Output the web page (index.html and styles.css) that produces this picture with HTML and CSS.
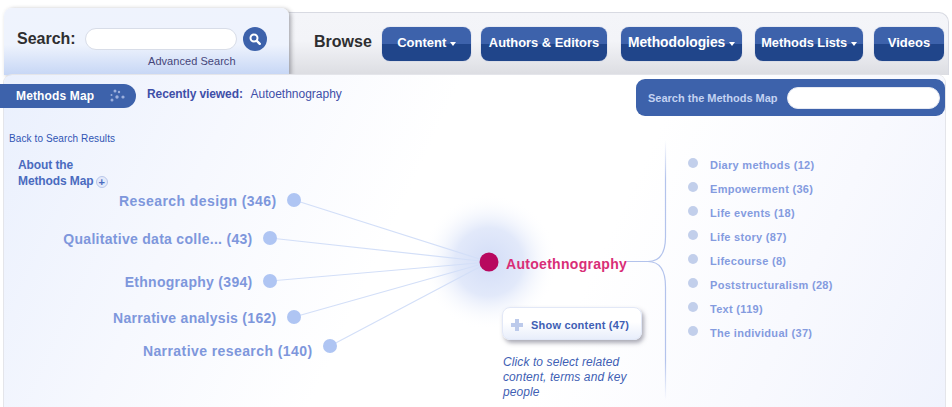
FILE: index.html
```html
<!DOCTYPE html>
<html lang="en">

<head>
    <meta charset="utf-8">
    <title>Methods Map</title>
    <link rel="stylesheet" href="styles.css">
</head>

<body>
    <div class="top">
        <form class="search">
            <div class="search-row">
                <label class="search-label">Search:</label>
                <span class="search-input"></span>
                <span class="search-go">
                    <svg width="14" height="14" viewBox="0 0 14 14">
                        <circle cx="6" cy="6" r="3.500" fill="none" stroke="#fff" stroke-width="2" />
                        <path d="M8.800 8.800L11.800 11.800" stroke="#fff" stroke-width="2.400" stroke-linecap="round" />
                    </svg>
                </span>
            </div>
            <a class="advanced">Advanced Search</a>
        </form>
        <div class="browse">
            <h2 class="browse-title">Browse</h2>
            <a class="btn btn-content">Content <i class="caret"></i></a>
            <a class="btn btn-authors">Authors &amp; Editors</a>
            <a class="btn btn-method">Methodologies <i class="caret"></i></a>
            <a class="btn btn-lists">Methods Lists <i class="caret"></i></a>
            <a class="btn btn-videos">Videos</a>
        </div>
    </div>

    <div class="panel">
        <!-- drawn in page coordinates, see viewBox -->
        <svg class="map" width="941" height="332" viewBox="4 75 941 332">
            <defs>
                <radialGradient id="glow">
                    <stop offset="0" stop-color="#d3ddf7" />
                    <stop offset="0.5" stop-color="#e2e9fa" />
                    <stop offset="1" stop-color="#fff" stop-opacity="0" />
                </radialGradient>
                <linearGradient id="rail" gradientUnits="userSpaceOnUse" x1="0" y1="140" x2="0" y2="400">
                    <stop offset="0" stop-color="#b3c3ec" stop-opacity="0" />
                    <stop offset="0.15" stop-color="#b3c3ec" />
                    <stop offset="0.85" stop-color="#b3c3ec" />
                    <stop offset="1" stop-color="#b3c3ec" stop-opacity="0" />
                </linearGradient>
            </defs>
            <circle cx="489" cy="262" r="68" fill="url(#glow)" />
            <g class="links">
                <path d="M294 200L489 262" />
                <path d="M270 238L489 262" />
                <path d="M270 281L489 262" />
                <path d="M294 317L489 262" />
                <path d="M330 346L489 262" />
            </g>
            <path class="rail" d="M665.500 140V237Q665.500 261.500 648 261.500" stroke="url(#rail)" />
            <path class="rail" d="M665.500 400V287Q665.500 261.500 648 261.500" stroke="url(#rail)" />
            <path class="rail-stem" d="M627 261.500H650" />
            <g class="nodes">
                <circle cx="294" cy="200" r="7" />
                <circle cx="270" cy="238" r="7" />
                <circle cx="270" cy="281" r="7" />
                <circle cx="294" cy="317" r="7" />
                <circle cx="330" cy="346" r="7" />
            </g>
            <circle cx="489" cy="262" r="9.500" fill="#b8085f" />
            <g class="labels">
                <text class="wide" x="276.500" y="206">Research design (346)</text>
                <text x="252.500" y="244">Qualitative data colle... (43)</text>
                <text x="252.500" y="287">Ethnography (394)</text>
                <text x="276.500" y="323">Narrative analysis (162)</text>
                <text class="wide" x="312.500" y="356">Narrative research (140)</text>
            </g>
            <text class="focus" x="506" y="269">Autoethnography</text>
        </svg>

        <div class="panel-head">
            <div class="tab">Methods Map
                <svg width="16" height="14" viewBox="0 0 16 14">
                    <g fill="#9db0dd">
                        <circle cx="3" cy="11" r="1.500" />
                        <circle cx="6" cy="2" r="1.500" />
                        <circle cx="8" cy="8" r="1.700" />
                        <circle cx="10" cy="3" r="1.200" />
                        <circle cx="2.500" cy="6" r="1" />
                        <circle cx="14" cy="8" r="1.600" />
                    </g>
                </svg>
            </div>
            <p class="recent"><strong>Recently viewed:</strong> Autoethnography</p>
            <div class="map-search">
                <span>Search the Methods Map</span>
                <i class="map-input"></i>
            </div>
        </div>

        <a class="back">Back to Search Results</a>
        <p class="about">About the<br>Methods Map<i class="about-plus">+</i></p>

        <ul class="related">
            <li>Diary methods (12)</li>
            <li>Empowerment (36)</li>
            <li>Life events (18)</li>
            <li>Life story (87)</li>
            <li>Lifecourse (8)</li>
            <li>Poststructuralism (28)</li>
            <li>Text (119)</li>
            <li>The individual (37)</li>
        </ul>

        <div class="show">
            <a class="show-btn"><b class="show-plus"></b>Show content (47)</a>
            <p class="show-note">Click to select related content, terms and key people</p>
        </div>
    </div>
</body>

</html>
```

FILE: styles.css
```css
html,
body {
    margin: 0;
    height: 407px;
    overflow: hidden;
    background-color: #fff;
    font-family: "Liberation Sans", Arial, sans-serif;
}

.top {
    display: flex;
    align-items: flex-end;
    height: 75px;
    padding-left: 4px;
}

.search {
    position: relative;
    z-index: 1;
    box-sizing: border-box;
    width: 285px;
    height: 67px;
    padding: 20px 0 0 13px;
    border-radius: 8px 8px 0 0;
    background: linear-gradient(#eff3fd 0, #eef3fd 55%, #c6d6f5 100%);
    box-shadow: 2px 1px 4px rgba(70, 70, 80, .45);
}

.search-row {
    display: flex;
    align-items: center;
    height: 22px;
}

.search-label {
    width: 68px;
    font-size: 16px;
    font-weight: bold;
    color: #2e2e30;
}

.search-input {
    box-sizing: border-box;
    width: 152px;
    height: 22px;
    border: 1px solid #d8dde8;
    border-radius: 11px;
    background-color: #fff;
}

.search-go {
    display: flex;
    align-items: center;
    justify-content: center;
    width: 24px;
    height: 24px;
    margin-left: 6px;
    border-radius: 50%;
    background-color: #3d62ab;
}

.advanced {
    display: block;
    margin: 5px 0 0 131px;
    font-size: 11px;
    letter-spacing: .05px;
    color: #45457a;
}

.browse {
    display: flex;
    align-items: flex-start;
    box-sizing: border-box;
    flex: 1;
    height: 63px;
    margin-right: 3px;
    padding-top: 14px;
    border-top: 1px solid #d8dae2;
    border-right: 1px solid #d8dae2;
    border-radius: 0 10px 0 0;
    background: linear-gradient(#f4f5f9 0, #f3f4f8 45%, #dcdde2 100%);
}

.browse-title {
    width: 68px;
    margin: 6px 0 0 25px;
    font-size: 16px;
    font-weight: bold;
    color: #2e2e30;
}

.btn {
    box-sizing: border-box;
    height: 34px;
    line-height: 32px;
    border-radius: 8px;
    background: linear-gradient(#3d62ab 0, #3d62ab 50%, #20458a 50%, #20458a 100%);
    box-shadow: 0 0 1px #7a8fc0;
    font-size: 13px;
    font-weight: bold;
    color: #fff;
    text-align: center;
    white-space: nowrap;
}

.btn-content {
    width: 89px;
}

.btn-authors {
    width: 126px;
    margin-left: 10px;
    font-size: 12.900px;
}

.btn-method {
    width: 121px;
    margin-left: 14px;
    font-size: 13.800px;
}

.btn-lists {
    width: 108px;
    margin-left: 13px;
    font-size: 12.800px;
}

.btn-videos {
    width: 70px;
    margin-left: 11px;
}

.caret {
    display: inline-block;
    margin-left: 0;
    vertical-align: 1px;
    border-top: 4px solid #fff;
    border-left: 3.500px solid transparent;
    border-right: 3.500px solid transparent;
}

.panel {
    position: relative;
    z-index: 2;
    box-sizing: border-box;
    height: 332px;
    margin: 0 7px 0 4px;
    border-radius: 8px 8px 0 0;
    background: linear-gradient(115deg, #eaf0fd 0, #f6f8fe 22%, #fff 42%, #fff 62%, #f8f9fe 82%, #f0f3fd 100%);
    box-shadow: 0 0 0 1px #e4e5ea;
}

.map {
    position: absolute;
    left: 0;
    top: 0;
}

.links path {
    fill: none;
    stroke: #d3dff8;
    stroke-width: 1.200;
}

.rail {
    fill: none;
    stroke-width: 1.200;
}

.rail-stem {
    fill: none;
    stroke: #b3c3ec;
    stroke-width: 1;
}

.nodes circle {
    fill: #afc5f3;
}

.labels text {
    font-size: 14px;
    font-weight: bold;
    fill: #7e97dc;
    text-anchor: end;
    letter-spacing: .29px;
}

.labels .wide {
    letter-spacing: .42px;
}

.focus {
    font-size: 14px;
    font-weight: bold;
    fill: #d92e77;
    letter-spacing: .3px;
}

.panel-head {
    position: relative;
    display: flex;
    align-items: flex-start;
    height: 62px;
}

.tab {
    display: flex;
    align-items: center;
    justify-content: space-between;
    box-sizing: border-box;
    width: 136px;
    height: 24px;
    margin: 9px 0 0 -4px;
    padding: 0 11px 0 16px;
    border-radius: 0 12px 12px 0;
    background-color: #3d62ab;
    font-size: 12px;
    font-weight: bold;
    letter-spacing: .15px;
    color: #fff;
}

.recent {
    margin: 12px 0 0 11px;
    font-size: 12px;
    color: #3f4fa8;
}

.recent strong {
    margin-right: 5px;
    letter-spacing: -.1px;
}

.map-search {
    display: flex;
    align-items: center;
    box-sizing: border-box;
    width: 309px;
    height: 37px;
    margin: 4px 0 0 auto;
    padding: 1px 0 0 12px;
    border-radius: 9px;
    background-color: #3d62ab;
    font-size: 11px;
    font-weight: bold;
    color: #c3d2f2;
}

.map-input {
    box-sizing: border-box;
    width: 153px;
    height: 22px;
    margin-left: 9px;
    border: 1px solid #e6e9f2;
    border-radius: 11px;
    background-color: #fff;
}

.back {
    position: relative;
    display: block;
    margin: -4px 0 0 5px;
    font-size: 10px;
    letter-spacing: .1px;
    color: #2f54b4;
}

.about {
    position: relative;
    margin: 13px 0 0 14px;
    font-size: 12px;
    font-weight: bold;
    line-height: 16px;
    letter-spacing: -.1px;
    color: #4a6bbf;
}

.about-plus {
    display: inline-block;
    box-sizing: border-box;
    width: 12px;
    height: 12px;
    margin-left: 2px;
    border: 1px solid #b9c7ea;
    border-radius: 50%;
    background-color: #e4eafa;
    font-size: 11px;
    font-style: normal;
    line-height: 10px;
    text-align: center;
    vertical-align: -1px;
}

.related {
    position: absolute;
    left: 684px;
    top: 78px;
    margin: 0;
    padding: 0;
    list-style: none;
}

.related li {
    position: relative;
    height: 24px;
    padding-left: 22px;
    font-size: 11px;
    font-weight: bold;
    line-height: 24px;
    letter-spacing: .3px;
    color: #849bdf;
}

.related li::before {
    content: "";
    position: absolute;
    left: 0;
    top: 5px;
    width: 10px;
    height: 10px;
    border-radius: 50%;
    background-color: #c2cfeb;
}

.show {
    position: absolute;
    left: 498px;
    top: 232px;
    width: 140px;
}

.show-btn {
    display: flex;
    align-items: center;
    box-sizing: border-box;
    height: 33px;
    padding: 3px 0 0 8px;
    border: 1px solid #e2e8f7;
    border-radius: 8px;
    background: linear-gradient(#fff 0, #fff 45%, #e8eefb 100%);
    box-shadow: 2px 3px 4px rgba(90, 90, 110, .5);
    font-size: 11px;
    font-weight: bold;
    letter-spacing: .2px;
    white-space: nowrap;
    color: #3f5fb4;
}

.show-plus {
    position: relative;
    width: 12px;
    height: 12px;
    margin-right: 8px;
    background: linear-gradient(#bccaeb, #bccaeb) center / 12px 4px no-repeat,
        linear-gradient(#bccaeb, #bccaeb) center / 4px 12px no-repeat;
}

.show-note {
    margin: 15px 0 0 1px;
    font-size: 12px;
    font-style: italic;
    line-height: 15px;
    letter-spacing: .1px;
    color: #3f5fb4;
}
```
